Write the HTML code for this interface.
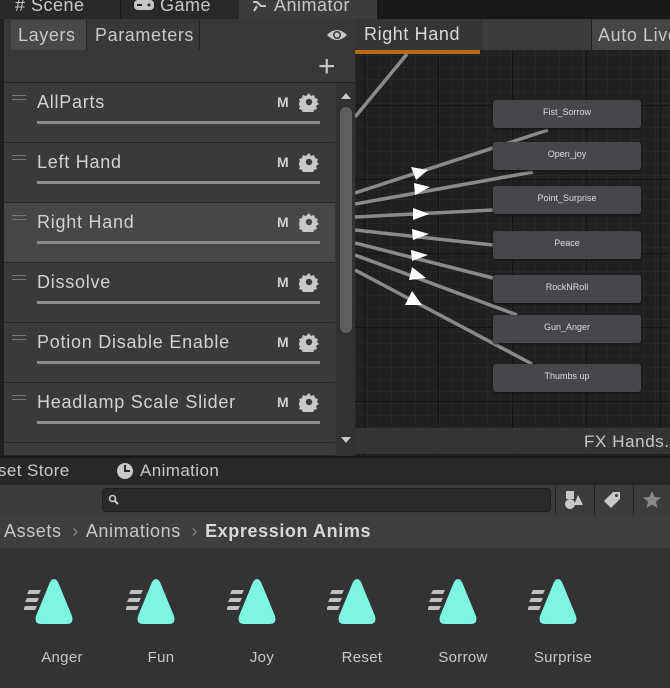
<!DOCTYPE html><html><head><style>
*{margin:0;padding:0;box-sizing:border-box}
body{width:670px;height:688px;overflow:hidden;background:#191919;font-family:"Liberation Sans",sans-serif;color:#c8c8c8;position:relative}
.a{position:absolute}
.row{position:absolute;left:4px;width:331px;height:60px;background:#3a3a3a;border-bottom:1px solid #262626}
.row.sel{background:#474747}
.row .n{position:absolute;left:33px;top:9px;font-size:18px;color:#d2d2d2;letter-spacing:.75px}
.row .h{position:absolute;left:8px;top:12px;width:14px;height:5px;border-top:1px solid #777;border-bottom:1px solid #777}
.row .m{position:absolute;left:273px;top:11px;font-size:14px;font-weight:bold;color:#d0d0d0}
.row .g{position:absolute;left:295px;top:9px}
.row .s{position:absolute;left:33px;top:38px;width:283px;height:3px;background:#8c8c8c}
.node{position:absolute;left:493px;width:148px;height:28px;background:#45474b;border-radius:3px;box-shadow:0 1px 2px #111;font-size:9px;color:#ddd;text-align:center;line-height:24px}
.ic{position:absolute;top:578px}
.lb{position:absolute;top:649px;font-size:15px;color:#c8c8c8;width:90px;text-align:center;letter-spacing:.3px}
.cv{color:#888;margin:0 7px 0 5px}
</style></head><body>
<div class="a" style="left:0;top:0;width:670px;height:19px;background:#191919"></div>
<div class="a" style="left:0;top:0;width:120px;height:19px;background:#282828"></div>
<div class="a" style="left:121px;top:0;width:118px;height:19px;background:#282828"></div>
<div class="a" style="left:15px;top:-5px;font-size:18px;color:#c8c8c8;letter-spacing:.5px">#&nbsp;Scene</div>
<svg class="a" style="left:134px;top:0" width="22" height="12"><rect x="0" y="0" width="20" height="10" rx="4" fill="#c8c8c8"/><rect x="3" y="4" width="5" height="2" fill="#282828"/><circle cx="15" cy="5" r="1.5" fill="#282828"/></svg>
<div class="a" style="left:160px;top:-5px;font-size:18px;letter-spacing:.5px">Game</div>
<div class="a" style="left:239px;top:0;width:138px;height:19px;background:#3c3c3c"></div>
<svg class="a" style="left:251px;top:0" width="16" height="12"><path d="M2 2h4l4 4h5M6 6l-3 5" stroke="#c8c8c8" stroke-width="2" fill="none"/></svg>
<div class="a" style="left:274px;top:-5px;font-size:18px;letter-spacing:.5px">Animator</div>
<div class="a" style="left:0;top:19px;width:355px;height:437px;background:#383838"></div>
<div class="a" style="left:0;top:19px;width:4px;height:437px;background:#1f1f1f"></div>
<div class="a" style="left:11px;top:20px;width:75px;height:30px;background:#484848"></div>
<div class="a" style="left:86px;top:20px;width:114px;height:30px;border-left:1px solid #222;border-right:1px solid #222"></div>
<div class="a" style="left:18px;top:25px;font-size:18px;letter-spacing:.6px">Layers</div>
<div class="a" style="left:95px;top:25px;font-size:18px;letter-spacing:.6px">Parameters</div>
<svg class="a" style="left:326px;top:27px" width="22" height="16"><path d="M1 8Q11 -2 21 8Q11 18 1 8z" fill="#c8c8c8"/><circle cx="11" cy="8" r="4" fill="#383838"/><circle cx="11" cy="8" r="2.5" fill="#c8c8c8"/></svg>
<div class="a" style="left:318px;top:50px;font-size:30px;color:#c8c8c8">+</div>
<div class="a" style="left:4px;top:82px;width:351px;height:1px;background:#222"></div>
<div class="row" style="top:83px"><div class="h"></div><div class="n">AllParts</div><div class="m">M</div><svg class="g" width="20" height="20" viewBox="0 0 20 20"><path d="M10 1l2 3 3-1 1 3 3 1-1 3 2 2-3 2 1 3-3 1-1 3-3-1-2 3-2-3-3 1-1-3-3-1 1-3-3-2 3-2-1-3 3-1 1-3 3 1z" fill="#c8c8c8"/><circle cx="10" cy="10" r="3.2" fill="#3a3a3a"/></svg><div class="s"></div></div>
<div class="row" style="top:143px"><div class="h"></div><div class="n">Left Hand</div><div class="m">M</div><svg class="g" width="20" height="20" viewBox="0 0 20 20"><path d="M10 1l2 3 3-1 1 3 3 1-1 3 2 2-3 2 1 3-3 1-1 3-3-1-2 3-2-3-3 1-1-3-3-1 1-3-3-2 3-2-1-3 3-1 1-3 3 1z" fill="#c8c8c8"/><circle cx="10" cy="10" r="3.2" fill="#3a3a3a"/></svg><div class="s"></div></div>
<div class="row sel" style="top:203px"><div class="h"></div><div class="n">Right Hand</div><div class="m">M</div><svg class="g" width="20" height="20" viewBox="0 0 20 20"><path d="M10 1l2 3 3-1 1 3 3 1-1 3 2 2-3 2 1 3-3 1-1 3-3-1-2 3-2-3-3 1-1-3-3-1 1-3-3-2 3-2-1-3 3-1 1-3 3 1z" fill="#c8c8c8"/><circle cx="10" cy="10" r="3.2" fill="#474747"/></svg><div class="s"></div></div>
<div class="row" style="top:263px"><div class="h"></div><div class="n">Dissolve</div><div class="m">M</div><svg class="g" width="20" height="20" viewBox="0 0 20 20"><path d="M10 1l2 3 3-1 1 3 3 1-1 3 2 2-3 2 1 3-3 1-1 3-3-1-2 3-2-3-3 1-1-3-3-1 1-3-3-2 3-2-1-3 3-1 1-3 3 1z" fill="#c8c8c8"/><circle cx="10" cy="10" r="3.2" fill="#3a3a3a"/></svg><div class="s"></div></div>
<div class="row" style="top:323px"><div class="h"></div><div class="n">Potion Disable Enable</div><div class="m">M</div><svg class="g" width="20" height="20" viewBox="0 0 20 20"><path d="M10 1l2 3 3-1 1 3 3 1-1 3 2 2-3 2 1 3-3 1-1 3-3-1-2 3-2-3-3 1-1-3-3-1 1-3-3-2 3-2-1-3 3-1 1-3 3 1z" fill="#c8c8c8"/><circle cx="10" cy="10" r="3.2" fill="#3a3a3a"/></svg><div class="s"></div></div>
<div class="row" style="top:383px"><div class="h"></div><div class="n">Headlamp Scale Slider</div><div class="m">M</div><svg class="g" width="20" height="20" viewBox="0 0 20 20"><path d="M10 1l2 3 3-1 1 3 3 1-1 3 2 2-3 2 1 3-3 1-1 3-3-1-2 3-2-3-3 1-1-3-3-1 1-3-3-2 3-2-1-3 3-1 1-3 3 1z" fill="#c8c8c8"/><circle cx="10" cy="10" r="3.2" fill="#3a3a3a"/></svg><div class="s"></div></div>
<div class="row" style="top:443px;height:13px"></div>
<div class="a" style="left:336px;top:83px;width:19px;height:373px;background:#323232"></div>
<div class="a" style="left:340px;top:107px;width:12px;height:226px;background:#5e5e5e;border-radius:6px"></div>
<svg class="a" style="left:340px;top:92px" width="12" height="8"><path d="M1 7L6 1L11 7z" fill="#c8c8c8"/></svg>
<svg class="a" style="left:340px;top:436px" width="12" height="8"><path d="M1 1L6 7L11 1z" fill="#c8c8c8"/></svg>
<div class="a" style="left:355px;top:19px;width:315px;height:437px;background-color:#202020;background-image:linear-gradient(#141414 1px,transparent 1px),linear-gradient(90deg,#141414 1px,transparent 1px),linear-gradient(#272727 1px,transparent 1px),linear-gradient(90deg,#272727 1px,transparent 1px);background-size:74px 74px,74px 74px,12px 12px,12px 12px;background-position:0 12px,9px 0,0 0,0 0"></div>
<div class="a" style="left:355px;top:19px;width:315px;height:31px;background:#3c3c3c"></div>
<div class="a" style="left:355px;top:19px;width:128px;height:31px;background:#353535"></div>
<div class="a" style="left:355px;top:50px;width:125px;height:4px;background:#b86a12"></div>
<div class="a" style="left:364px;top:24px;font-size:18px;color:#d8d8d8;letter-spacing:.6px">Right Hand</div>
<div class="a" style="left:591px;top:20px;width:79px;height:30px;background:#464646;border-left:1px solid #222"></div>
<div class="a" style="left:598px;top:25px;font-size:18px;white-space:nowrap;letter-spacing:.6px">Auto Live</div>
<svg class="a" style="left:355px;top:19px" width="315" height="410">
<g stroke="#8a8a8a" stroke-width="3.5" fill="none">
<path d="M0 98L52 35"/><path d="M0 174L193 111"/><path d="M0 185L178 153"/><path d="M0 198L138 191"/><path d="M0 211L138 226"/><path d="M0 224L138 259"/><path d="M0 236L162 296"/><path d="M0 251L177 345"/>
</g>
<g fill="#fff">
<path d="M56 148l17 3-12 10z"/><path d="M59 164l16 4-15 8z"/><path d="M58 189l16 6-16 6z"/><path d="M57 210l17 5-16 6z"/><path d="M56 231l17 5-16 6z"/><path d="M57 248l14 11-17 2z"/><path d="M57 272l10 14h-17z"/>
</g>
</svg>
<div class="node" style="top:100px">Fist_Sorrow</div>
<div class="node" style="top:142px">Open_joy</div>
<div class="node" style="top:186px">Point_Surprise</div>
<div class="node" style="top:231px">Peace</div>
<div class="node" style="top:275px">RockNRoll</div>
<div class="node" style="top:315px">Gun_Anger</div>
<div class="node" style="top:364px">Thumbs up</div>
<div class="a" style="left:355px;top:428px;width:315px;height:26px;background:#353535"></div>
<div class="a" style="left:584px;top:432px;font-size:17px;white-space:nowrap;letter-spacing:.6px">FX Hands.co</div>
<div class="a" style="left:0;top:458px;width:670px;height:27px;background:#282828"></div>
<div class="a" style="left:-2px;top:461px;font-size:17px;letter-spacing:.4px">set Store</div>
<svg class="a" style="left:116px;top:462px" width="18" height="18"><circle cx="9" cy="9" r="8" fill="#c8c8c8"/><path d="M9 3v6h5" stroke="#282828" stroke-width="2" fill="none"/></svg>
<div class="a" style="left:140px;top:461px;font-size:17px;letter-spacing:.4px">Animation</div>
<div class="a" style="left:0;top:485px;width:670px;height:30px;background:#3c3c3c"></div>
<div class="a" style="left:102px;top:488px;width:449px;height:24px;background:#2a2a2a;border:1px solid #1e1e1e;border-radius:4px"></div>
<svg class="a" style="left:108px;top:494px" width="12" height="12"><circle cx="4.5" cy="4.5" r="3" stroke="#ccc" stroke-width="1.6" fill="none"/><path d="M7 7l3 3" stroke="#ccc" stroke-width="2"/></svg>
<div class="a" style="left:555px;top:485px;width:1px;height:30px;background:#222"></div>
<div class="a" style="left:594px;top:485px;width:1px;height:30px;background:#222"></div>
<div class="a" style="left:633px;top:485px;width:1px;height:30px;background:#222"></div>
<svg class="a" style="left:564px;top:489px" width="20" height="22"><rect x="2" y="2" width="8" height="8" fill="#c8c8c8"/><circle cx="6" cy="15" r="5" fill="#c8c8c8"/><path d="M14 6l5 10h-9z" fill="#c8c8c8"/></svg>
<svg class="a" style="left:603px;top:491px" width="18" height="18"><path d="M10 1h7v7l-9 9-7-7z" fill="#c8c8c8"/><circle cx="13.5" cy="4.5" r="1.5" fill="#3c3c3c"/></svg>
<svg class="a" style="left:642px;top:490px" width="20" height="20"><path d="M10 1l2.6 6 6.4.5-5 4.3 1.6 6.2L10 14.6 4.4 18l1.6-6.2-5-4.3 6.4-.5z" fill="#888"/></svg>
<div class="a" style="left:0;top:515px;width:670px;height:33px;background:#3e3e3e"></div>
<div class="a" style="left:4px;top:521px;font-size:18px;white-space:nowrap;letter-spacing:.6px">Assets<span class="cv"> &#8250;</span>Animations<span class="cv"> &#8250;</span><b style="color:#d8d8d8">Expression Anims</b></div>
<div class="a" style="left:0;top:548px;width:670px;height:140px;background:#333"></div>
<svg width="0" height="0" style="position:absolute"><defs><g id="ai"><path d="M5 12h12l-2 4H3zM3 20h12l-2 4H1zM1 28h12l-2 4H-1z" fill="#c0c0c0"/><path d="M30 1Q32 1 34 4L48 38Q50 46 43 46H17Q10 46 12 38L26 4Q28 1 30 1z" fill="#7ef5e0"/></g></defs></svg>
<svg class="ic" style="left:24px" width="52" height="48"><use href="#ai"/></svg>
<svg class="ic" style="left:126px" width="52" height="48"><use href="#ai"/></svg>
<svg class="ic" style="left:227px" width="52" height="48"><use href="#ai"/></svg>
<svg class="ic" style="left:327px" width="52" height="48"><use href="#ai"/></svg>
<svg class="ic" style="left:428px" width="52" height="48"><use href="#ai"/></svg>
<svg class="ic" style="left:528px" width="52" height="48"><use href="#ai"/></svg>
<div class="lb" style="left:17px">Anger</div>
<div class="lb" style="left:116px">Fun</div>
<div class="lb" style="left:217px">Joy</div>
<div class="lb" style="left:317px">Reset</div>
<div class="lb" style="left:418px">Sorrow</div>
<div class="lb" style="left:518px">Surprise</div>
</body></html>
